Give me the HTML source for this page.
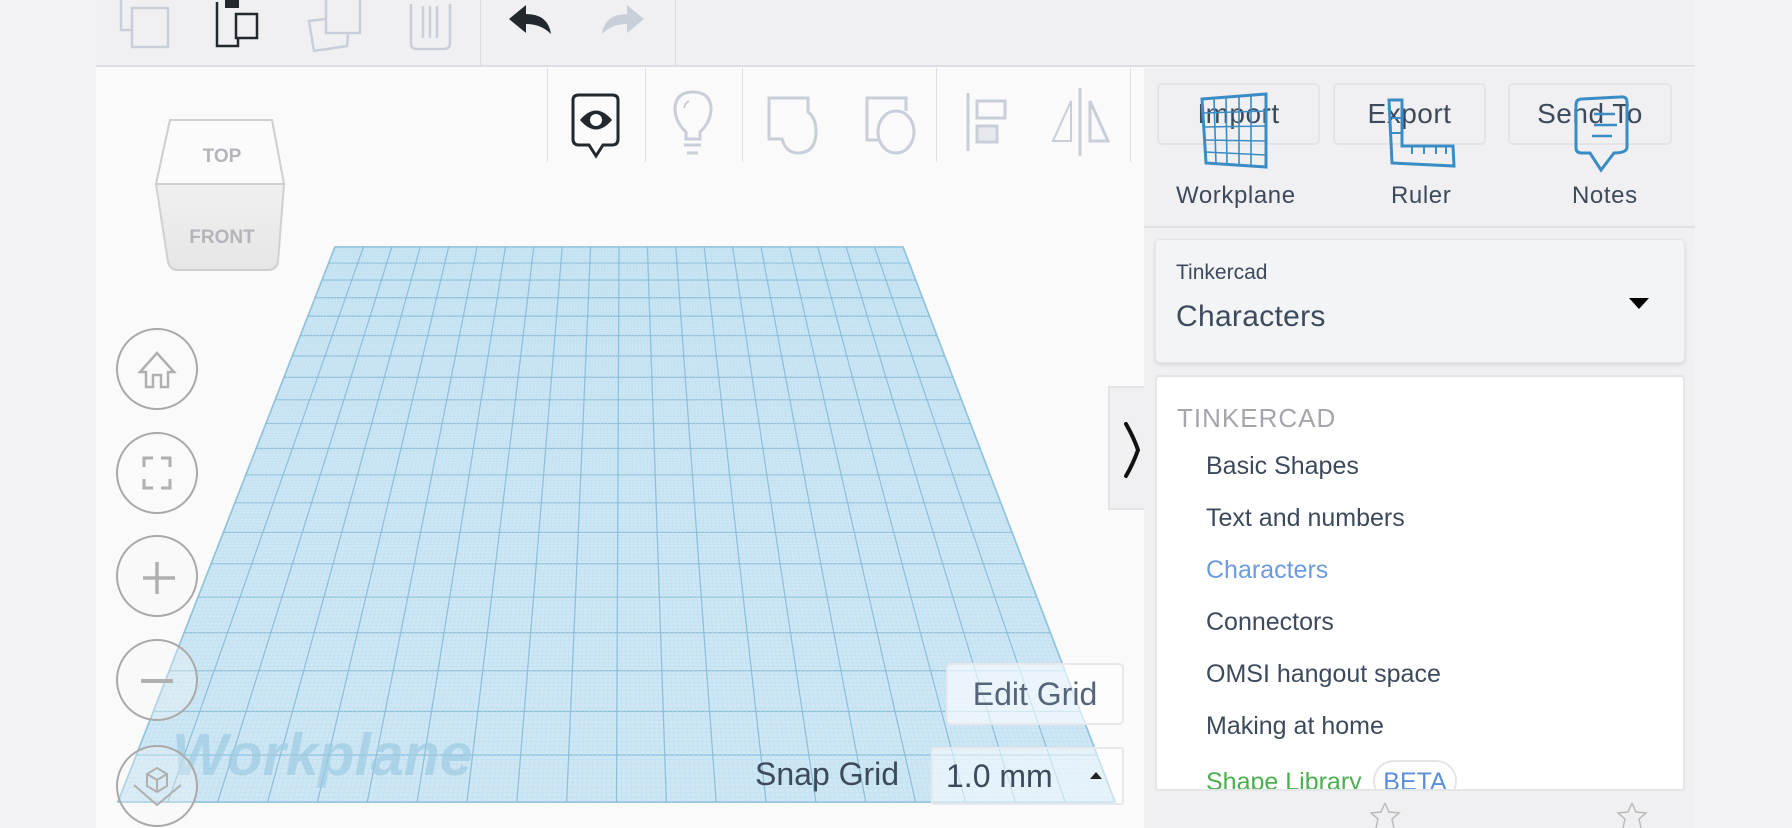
<!DOCTYPE html>
<html><head><meta charset="utf-8">
<style>
*{margin:0;padding:0;box-sizing:border-box}
body{width:1792px;height:828px;overflow:hidden;background:#f3f3f5;font-family:"Liberation Sans",sans-serif;position:relative}
.abs{position:absolute}
.txt{font-family:"Liberation Sans",sans-serif;color:#3c4a5c;white-space:nowrap}
</style></head><body>
<div class="abs" style="left:96px;top:0;width:1599px;height:828px;background:#fafafa"></div>
<div class="abs" style="left:96px;top:0;width:1599px;height:67px;background:#f0f0f2;border-bottom:2px solid #dde1e6"></div>
<div class="abs" style="left:480px;top:0;width:1px;height:66px;background:#d8dce2"></div>
<div class="abs" style="left:675px;top:0;width:1px;height:66px;background:#d8dce2"></div>
<svg class="abs" style="left:96px;top:0" width="600" height="66" viewBox="96 0 600 66">
 <g fill="none" stroke="#c9cfd8" stroke-width="2.5">
  <path d="M121 0 V30 H132"/><rect x="132" y="8" width="36" height="39"/>
  <rect x="326" y="-3" width="34" height="36"/>
  <path d="M326 19 L309 21 L314 51 L347 46 L348 34"/>
  <path d="M411 4 V43 Q411 49 417 49 H444 Q450 49 450 43 V4 M423 6 V38 M430 6 V38 M437 6 V38"/>
 </g>
 <g fill="none" stroke="#22292e" stroke-width="2.5">
  <path d="M217 2 V46 H238 V38"/><rect x="236" y="14" width="21" height="24" fill="#f0f0f2"/>
 </g>
 <rect x="225" y="-2" width="14" height="10" fill="#22292e"/>
 <path d="M509 19 L526 5 V14 Q548 14 551 34 Q541 24 526 24 V33 Z" fill="#22292e"/>
 <path d="M644 19 L627 5 V14 Q605 14 602 34 Q612 24 627 24 V33 Z" fill="#c9cfd8"/>
</svg>
<div class="abs" style="left:547px;top:68px;width:1px;height:94px;background:#dde1e6"></div>
<div class="abs" style="left:645px;top:68px;width:1px;height:94px;background:#dde1e6"></div>
<div class="abs" style="left:742px;top:68px;width:1px;height:94px;background:#dde1e6"></div>
<div class="abs" style="left:936px;top:68px;width:1px;height:94px;background:#dde1e6"></div>
<div class="abs" style="left:1130px;top:68px;width:1px;height:94px;background:#dde1e6"></div>
<svg class="abs" style="left:540px;top:60px" width="600" height="110" viewBox="540 60 600 110">
 <path d="M573 100 Q573 95 579 95 H612 Q618 95 618 100 V139 Q618 145 612 145 H603 L596 156 L589 145 H579 Q573 145 573 139 Z" fill="none" stroke="#22292e" stroke-width="3"/>
 <path d="M580 120 Q596 101 612 120 Q596 139 580 120 Z" fill="#22292e"/>
 <circle cx="596" cy="120" r="6" fill="#fff"/>
 <g fill="none" stroke="#c9cfd8" stroke-width="3">
  <path d="M686 139 V132 Q675 122 675 108 Q676 92 693 92 Q710 92 711 108 Q711 122 700 132 V139 Z"/>
  <path d="M684 108 Q685 103 689 101" stroke-width="2"/>
  <path d="M684 145 H701 M687 153 H698" stroke-width="3"/>
  <path d="M769 98 H808 V112 Q816 118 816 131 Q816 153 798 153 Q786 153 782 139 H769 Z"/>
  <path d="M879 140 H867 V98 H906 V111"/>
  <ellipse cx="896" cy="132" rx="18" ry="21"/>
  <path d="M968 93 V151"/><rect x="977" y="101" width="28" height="17"/><rect x="977" y="126" width="20" height="16" fill="#e6e9ee"/>
  <path d="M1080 88 V156"/><path d="M1071 101 L1053 141 H1071 Z" stroke-width="2"/><path d="M1090 101 L1108 141 H1090 Z"/>
 </g>
</svg>
<svg class="abs" style="left:150px;top:110px" width="140" height="165">
 <defs><linearGradient id="cg" x1="0" y1="0" x2="0" y2="1"><stop offset="0" stop-color="#f7f7f7"/><stop offset="1" stop-color="#e6e6e6"/></linearGradient></defs>
 <path d="M20 10 H122 L134 74 L128 152 Q126 160 118 160 H28 Q20 160 18 152 L6 74 Z" fill="url(#cg)" stroke="#d0d0d0" stroke-width="2"/>
 <path d="M20 10 H122 L134 74 H6 Z" fill="#fbfbfb" stroke="#cfcfcf" stroke-width="2"/>
 <text x="72" y="52" text-anchor="middle" font-family="Liberation Sans" font-weight="bold" font-size="19" fill="#b3b5ba">TOP</text>
 <text x="72" y="133" text-anchor="middle" font-family="Liberation Sans" font-weight="bold" font-size="19" fill="#b3b5ba">FRONT</text>
</svg>
<svg class="abs" style="left:0;top:0" width="1150" height="828">
 <path d="M335 247 H903 L1115 802 H118 Z" fill="#cfe7f4" stroke="#b0d7ec" stroke-width="2"/>
 <g id="gl"></g>
 <text x="172" y="775" font-family="Liberation Sans" font-weight="bold" font-style="italic" font-size="59" fill="#9ecbe2" opacity="0.7">Workplane</text>
</svg>
<script>
(function(){
 var g=document.getElementById('gl'),s='';
 var yt=247,yb=802,k=1.755;
 function Y(t){return yb-(yb-yt)*(1-1/(1+(k-1)*t))/(1-1/k);}
 function X(u,y){var f=(y-yt)/(yb-yt);var l=335+(118-335)*f,r=903+(1115-903)*f;return l+(r-l)*u;}
 for(var i=0;i<=200;i++){var t=i/200;var y=Y(t);var maj=i%10==0;
  s+='<line x1="'+X(0,y)+'" y1="'+y+'" x2="'+X(1,y)+'" y2="'+y+'" stroke="'+(maj?'#8fc0da':'#bcdff0')+'" stroke-width="'+(maj?1.3:0.6)+'"/>';}
 for(var j=0;j<=200;j++){var u=j/200;var maj=j%10==0;
  s+='<line x1="'+X(u,yt)+'" y1="'+yt+'" x2="'+X(u,yb)+'" y2="'+yb+'" stroke="'+(maj?'#8fc0da':'#bcdff0')+'" stroke-width="'+(maj?1.3:0.6)+'"/>';}
 g.innerHTML=s;
})();
</script>
<svg class="abs" style="left:110px;top:320px" width="100" height="508">
 <g fill="none" stroke="#a9a9a9" stroke-width="2"><circle cx="47" cy="49" r="40" fill="rgba(250,250,250,0.6)"/><circle cx="47" cy="153" r="40" fill="rgba(250,250,250,0.6)"/><circle cx="47" cy="256" r="40" fill="rgba(250,250,250,0.3)"/><circle cx="47" cy="360" r="40" fill="rgba(250,250,250,0.3)"/><circle cx="47" cy="466" r="40" fill="rgba(250,250,250,0.3)"/></g>
 <g fill="none" stroke="#b0b0b0" stroke-width="3">
  <path d="M30 52 L47 33 L64 52 H58 V67 H51 V55 H43 V67 H36 V52 Z" stroke-width="2.5"/>
  <path d="M34 147 V138 H43 M51 138 H60 V147 M34 159 V168 H43 M51 168 H60 V159"/>
  <path d="M33 258 H65 M47 242 V274" stroke-width="3.5"/>
  <path d="M31 361 H63" stroke-width="4"/>
  <path d="M37 454 L47 448 L57 454 V466 L47 472 L37 466 Z M37 454 L47 460 L57 454 M47 460 V472 M24 465 L47 485 L71 465" stroke-width="2"/>
 </g>
</svg>
<div class="abs txt" style="left:946px;top:663px;width:178px;height:62px;border:2px solid #e6e8eb;border-radius:5px;background:rgba(255,255,255,0.6);font-size:32px;line-height:58px;text-align:center;color:#56657a">Edit Grid</div>
<div class="abs txt" style="left:755px;top:756px;font-size:32px;color:#3c4a5c">Snap Grid</div>
<div class="abs" style="left:931px;top:747px;width:193px;height:58px;border:2px solid #e6e8eb;border-radius:3px;background:rgba(255,255,255,0.5)"></div>
<div class="abs txt" style="left:946px;top:758px;font-size:32px;color:#3c4a5c">1.0 mm</div>
<div class="abs" style="left:1090px;top:772px;width:0;height:0;border-left:6px solid transparent;border-right:6px solid transparent;border-bottom:7px solid #222"></div>
<div class="abs" style="left:1108px;top:386px;width:40px;height:124px;background:#f0f0f2;border:2px solid #e2e4e8;border-right:none"></div>
<svg class="abs" style="left:1120px;top:420px" width="24" height="60"><path d="M6 4 Q14 18 18 30 Q13 44 6 56" fill="none" stroke="#111" stroke-width="4" stroke-linecap="round"/></svg>
<div class="abs" style="left:1144px;top:68px;width:551px;height:760px;background:#f0f0f2"></div>
<div class="abs" style="left:1144px;top:226px;width:551px;height:2px;background:#dde1e6"></div>
<div class="abs txt" style="left:1157px;top:83px;width:163px;height:62px;border:2px solid #e2e4e8;border-radius:5px;font-size:28px;letter-spacing:0.5px;line-height:58px;text-align:center">Import</div>
<div class="abs txt" style="left:1333px;top:83px;width:153px;height:62px;border:2px solid #e2e4e8;border-radius:5px;font-size:28px;letter-spacing:0.5px;line-height:58px;text-align:center">Export</div>
<div class="abs txt" style="left:1508px;top:83px;width:164px;height:62px;border:2px solid #e2e4e8;border-radius:5px;font-size:28px;letter-spacing:0.5px;line-height:58px;text-align:center">Send To</div>
<svg class="abs" style="left:1140px;top:80px" width="560" height="110" viewBox="1140 80 560 110">
 <g fill="none" stroke="#3a8cc4" stroke-width="3">
  <path d="M1202 99 L1266 94 L1266 167 L1206 163 Z"/>
  <path d="M1203 113 L1266 111 M1204 127 L1266 126 M1204 140 L1266 141 M1205 152 L1266 155 M1214 98 L1216 164 M1226 97 L1227 165 M1239 96 L1239 166 M1251 95 L1251 166" stroke-width="1.6"/>
  <path d="M1389 100 H1402 V146 L1453 146 L1454 166 L1392 163 Z"/>
  <path d="M1412 146 V154 M1424 146 V154 M1436 146 V154 M1446 146 V154 M1392 118 H1402 M1392 133 H1402" stroke-width="2"/>
  <path d="M1582 99 Q1576 99 1576 105 V148 Q1576 153 1582 153 H1590 L1601 170 L1614 153 Q1627 153 1627 147 V102 Q1627 96 1620 97 Z"/>
  <path d="M1594 114 H1615 M1594 125 H1617 M1592 136 H1612" stroke-width="2.5"/>
 </g>
</svg>
<div class="abs txt" style="left:1176px;top:182px;font-size:24px;letter-spacing:0.6px">Workplane</div>
<div class="abs txt" style="left:1391px;top:182px;font-size:24px;letter-spacing:0.6px">Ruler</div>
<div class="abs txt" style="left:1572px;top:182px;font-size:24px;letter-spacing:0.6px">Notes</div>
<div class="abs" style="left:1155px;top:239px;width:530px;height:124px;background:#f3f4f6;border:1px solid #e3e5e9;border-radius:5px;box-shadow:0 2px 4px rgba(0,0,0,0.1)"></div>
<div class="abs txt" style="left:1176px;top:261px;font-size:21px">Tinkercad</div>
<div class="abs txt" style="left:1176px;top:300px;font-size:30px;letter-spacing:0.3px">Characters</div>
<div class="abs" style="left:1629px;top:298px;width:0;height:0;border-left:10px solid transparent;border-right:10px solid transparent;border-top:11px solid #000"></div>
<div class="abs" style="left:1155px;top:375px;width:530px;height:416px;background:#fff;border:2px solid #e3e5e9;border-radius:4px;overflow:hidden">
 <div class="abs txt" style="left:20px;top:26px;font-size:26px;color:#a3a6aa;letter-spacing:1px">TINKERCAD</div>
 <div class="abs txt" style="left:49px;top:75px;font-size:25px">Basic Shapes</div>
 <div class="abs txt" style="left:49px;top:127px;font-size:25px">Text and numbers</div>
 <div class="abs txt" style="left:49px;top:179px;font-size:25px;color:#6b9be0">Characters</div>
 <div class="abs txt" style="left:49px;top:231px;font-size:25px">Connectors</div>
 <div class="abs txt" style="left:49px;top:283px;font-size:25px">OMSI hangout space</div>
 <div class="abs txt" style="left:49px;top:335px;font-size:25px">Making at home</div>
 <div class="abs txt" style="left:49px;top:391px;font-size:25px;color:#4caf50">Shape Library</div>
 <div class="abs txt" style="left:216px;top:383px;width:84px;height:42px;border:2px solid #e3e5e9;border-radius:21px;font-size:25px;color:#5b8fd9;text-align:center;line-height:40px">BETA</div>
</div>
<svg class="abs" style="left:1370px;top:800px" width="300" height="28"><g fill="none" stroke="#bbb" stroke-width="1.5"><path d="M15 3 L19 12 L29 13 L22 19 L24 28 M15 3 L11 12 L1 13 L8 19 L6 28"/><path d="M262 3 L266 12 L276 13 L269 19 L271 28 M262 3 L258 12 L248 13 L255 19 L253 28"/></g></svg>
</body></html>
